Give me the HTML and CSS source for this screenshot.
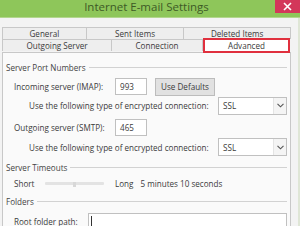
FILE: index.html
```html
<!DOCTYPE html>
<html>
<head>
<meta charset="utf-8">
<link rel="stylesheet" href="styles.css">
</head>
<body>
<div class="window">
  <div class="titlebar">
    <span></span>
    <span class="title">Internet E-mail Settings</span>
    <span class="close">
      <svg width="9" height="9" viewBox="0 0 9 9"><path d="M1 1L8 8M8 1L1 8" stroke="#fff" stroke-width="1.6"/></svg>
    </span>
  </div>
  <div class="body">
    <div class="tabs">
      <div class="tabrow">
        <div class="tab w1">General</div>
        <div class="tab w2">Sent Items</div>
        <div class="tab w3">Deleted Items</div>
      </div>
      <div class="tabrow">
        <div class="tab w4">Outgoing Server</div>
        <div class="tab w5">Connection</div>
        <div class="tab active w6">Advanced</div>
      </div>
    </div>
    <div class="panel">
      <div class="group g1"><span>Server Port Numbers</span><i></i></div>
      <div class="row r1">
        <span class="lbl">Incoming server (IMAP):</span>
        <span class="box port">993</span>
        <span class="btn">Use Defaults</span>
      </div>
      <div class="row r2">
        <span class="lbl2">Use the following type of encrypted connection:</span>
        <span class="select">SSL<b class="arrow"><svg width="7" height="5" viewBox="0 0 7 5"><path d="M0.5 0.8L3.5 3.8L6.5 0.8" stroke="#555" stroke-width="1.1" fill="none"/></svg></b></span>
      </div>
      <div class="row r3">
        <span class="lbl">Outgoing server (SMTP):</span>
        <span class="box port">465</span>
      </div>
      <div class="row r4">
        <span class="lbl2">Use the following type of encrypted connection:</span>
        <span class="select">SSL<b class="arrow"><svg width="7" height="5" viewBox="0 0 7 5"><path d="M0.5 0.8L3.5 3.8L6.5 0.8" stroke="#555" stroke-width="1.1" fill="none"/></svg></b></span>
      </div>
      <div class="group g2"><span>Server Timeouts</span><i></i></div>
      <div class="row r5">
        <span class="short">Short</span>
        <span class="track"><em></em></span>
        <span class="long">Long</span>
        <span class="time">5 minutes 10 seconds</span>
      </div>
      <div class="group g3"><span>Folders</span><i></i></div>
      <div class="row r6">
        <span class="lbl3">Root folder path:</span>
        <span class="box path"><u class="caret"></u></span>
      </div>
    </div>
  </div>
</div>
</body>
</html>
```

FILE: styles.css
```css
* { box-sizing: border-box; }
html, body { margin: 0; padding: 0; }
body {
  width: 300px;
  height: 226px;
  overflow: hidden;
  font-family: "Open Sans", "Noto Sans", sans-serif;
  font-size: 8.1px;
  color: #3a3a3a;
  background: #f0f0f0;
  white-space: nowrap;
}
.window {
  width: 300px;
  height: 226px;
  display: flex;
  flex-direction: column;
  background: #eef1ea;
}
.titlebar {
  height: 18px;
  flex: none;
  display: grid;
  grid-template-columns: 25px 1fr 25px;
  align-items: start;
  background: #8ec65a;
  border-bottom: 1px solid #b3d68f;
}
.title {
  text-align: center;
  font-size: 11.5px;
  line-height: 14px;
  color: #3d5a26;
  padding-right: 7px;
}
.close {
  height: 13px;
  background: #d3375a;
  display: flex;
  align-items: center;
  justify-content: center;
}
.body {
  flex: 1;
  display: flex;
  flex-direction: column;
  padding: 9px 7px 0 2px;
  background: #f3f3f3;
  border-right: 2px solid #dfe6d6;
}
.tabs { display: flex; flex-direction: column; }
.tabrow { display: flex; height: 12px; }
.tab {
  height: 12px;
  line-height: 11px;
  text-align: center;
  background: #eeeeee;
  border: 1px solid #c8c8c8;
  border-bottom: none;
  border-left-width: 0;
  color: #3a3a3a;
}
.tabrow .tab:first-child { border-left-width: 1px; }
.w1 { width: 85px; }
.w2 { width: 98px; }
.w3 { width: 107px; }
.w4 { width: 110px; }
.w5 { width: 91px; }
.w6 { width: 87px; }
.tab.active {
  background: #fff;
  border: 2px solid #e0303e;
  height: 15px;
  line-height: 11px;
  position: relative;
  z-index: 2;
  margin-top: -1px;
}
.panel {
  flex: 1;
  margin-top: 1px;
  background: #fafafa;
  border: 1px solid #c8c8c8;
  border-bottom: none;
  padding: 0 3px 0 3px;
  display: flex;
  flex-direction: column;
}
.group {
  height: 14px;
  display: flex;
  align-items: center;
  gap: 3px;
  color: #444;
}
.group i {
  flex: 1;
  height: 0;
  border-top: 1px solid #d2d2d2;
}
.g1 { margin-top: 7px; }
.g2 { margin-top: 4px; }
.g3 { margin-top: 4px; }
.row { display: flex; align-items: center; }
.r1 { height: 19px; margin-top: 3px; }
.r2 { height: 19px; }
.r3 { height: 18px; margin-top: 3px; }
.r4 { height: 18px; margin-top: 2px; }
.r5 { height: 14px; margin-top: 2px; }
.r6 { height: 18px; margin-top: 4px; }
.lbl { width: 109px; padding-left: 8px; flex: none; }
.lbl2 { width: 212px; padding-left: 23px; flex: none; }
.lbl3 { width: 82px; padding-left: 8px; flex: none; }
.box {
  height: 17px;
  background: #fff;
  border: 1px solid #c0c0c0;
  display: flex;
  align-items: center;
  padding-left: 4px;
}
.port { width: 32px; }
.path { width: 199px; padding-left: 2px; }
.caret { display: block; width: 1px; height: 10px; background: #333; }
.btn {
  margin-left: 8px;
  width: 60px;
  height: 18px;
  background: #e1e1e1;
  border: 1px solid #bcbcbc;
  display: flex;
  align-items: center;
  justify-content: center;
}
.select {
  width: 70px;
  height: 18px;
  background: #fff;
  border: 1px solid #c0c0c0;
  display: flex;
  align-items: center;
  padding-left: 4px;
}
.arrow {
  margin-left: auto;
  width: 13px;
  height: 16px;
  display: flex;
  align-items: center;
  justify-content: center;
  border-left: 1px solid #e4e4e4;
  background: #f4f4f4;
}
.short { width: 39px; padding-left: 8px; flex: none; }
.track {
  width: 59px;
  height: 3px;
  background: #e3e3e3;
  border-radius: 1px;
  display: flex;
  justify-content: center;
  flex: none;
}
.track em { width: 3px; height: 5px; background: #d8d8d8; }
.long { margin-left: 11px; }
.time { margin-left: 7px; }
```
